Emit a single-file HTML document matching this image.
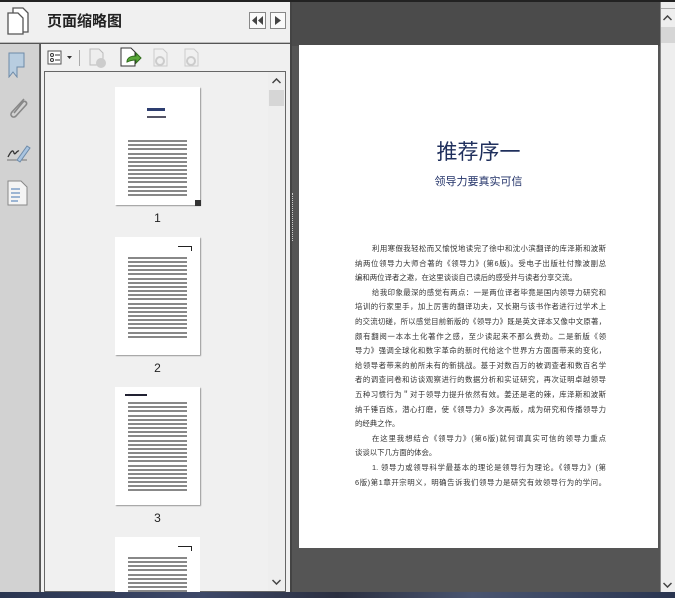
<!DOCTYPE html>
<html><head><meta charset="utf-8"><style>
*{margin:0;padding:0;box-sizing:border-box}
body{width:675px;height:598px;overflow:hidden;position:relative;background:#555;font-family:"Liberation Sans","Noto Sans CJK SC",sans-serif}
.a{position:absolute}
.thumb{position:absolute;left:115px;width:85px;height:118px;background:#fff;box-shadow:1px 1px 1px #999}
.tl{position:absolute;left:13px;right:13px;height:2px;background:#888}
.num{position:absolute;left:150px;width:15px;text-align:center;font-size:12px;color:#222}
.txt{position:absolute;left:355px;width:251px;font-size:7.4px;line-height:14.6px;color:#333;font-family:"Liberation Sans","Noto Sans CJK SC",sans-serif}
.txt div{white-space:nowrap;text-align:justify;text-align-last:justify;height:14.6px}
.txt div.e{text-align-last:left}
.ind{padding-left:17px}
</style></head><body>
<div class="a" style="left:0;top:0;width:675px;height:2px;background:#222"></div>
<div class="a" style="left:0;top:2px;width:290px;height:41px;background:#f0f0f0;border-bottom:1px solid #bbb"></div>
<svg class="a" style="left:6px;top:6px" width="24" height="30" viewBox="0 0 24 30"><path d="M7 2h10l5 5v19H7z" fill="#fff" stroke="#555" stroke-width="1.3"/><path d="M2 7h10l5 5v16H2z" fill="#fff" stroke="#555" stroke-width="1.3"/></svg>
<div class="a" style="left:47px;top:10px;font-size:15px;font-weight:bold;color:#222;font-family:'Noto Sans CJK SC',sans-serif">页面缩略图</div>
<div class="a" style="left:249px;top:12px;width:17px;height:17px;border:1px solid #888;background:#fafafa"></div>
<svg class="a" style="left:252px;top:16px" width="12" height="9"><path d="M5 0L0 4.5 5 9zM11 0L6 4.5 11 9z" fill="#444"/></svg>
<div class="a" style="left:270px;top:12px;width:16px;height:17px;border:1px solid #888;background:#fafafa"></div>
<svg class="a" style="left:275px;top:16px" width="7" height="9"><path d="M0 0L6 4.5 0 9z" fill="#444"/></svg>
<div class="a" style="left:0;top:44px;width:40px;height:548px;background:#d2d2d2;border-right:1px solid #666"></div>
<svg class="a" style="left:8px;top:52px" width="18" height="26"><path d="M1 1h15v14h-7v10l-4-5-4 5z" fill="#b8cde0" stroke="#6d8aa8"/></svg>
<svg class="a" style="left:6px;top:96px" width="24" height="24"><path d="M18 3L6 16c-3 3 1 7 4 4l10-11c2-2-1-5-3-3L8 17" fill="none" stroke="#888" stroke-width="1.6"/></svg>
<svg class="a" style="left:5px;top:142px" width="26" height="22"><path d="M2 18h20" stroke="#777"/><path d="M3 15c3-6 5-8 6-4 1 3 3-3 5-2" fill="none" stroke="#333" stroke-width="1.3"/><path d="M12 18l10-14 3 2-10 14z" fill="#a9c4e0" stroke="#6d8aa8"/></svg>
<svg class="a" style="left:7px;top:180px" width="22" height="26"><path d="M1 1h13l6 6v18H1z" fill="#f4f4f4" stroke="#888"/><path d="M4 9h9M4 13h9M4 17h9M4 21h7" stroke="#7fa0c8" stroke-width="1.4"/></svg>
<div class="a" style="left:41px;top:44px;width:249px;height:548px;background:#f0f0f0"></div>
<div class="a" style="left:44px;top:71px;width:242px;height:521px;border:1px solid #666;background:#f0f0f0"></div>
<svg class="a" style="left:47px;top:49px" width="28" height="18"><rect x="1" y="2" width="13" height="13" fill="#fff" stroke="#555"/><circle cx="5" cy="6" r="1.5" fill="none" stroke="#333"/><circle cx="5" cy="11" r="1.5" fill="none" stroke="#333"/><path d="M8 6h5M8 11h5" stroke="#333"/><path d="M20 7h5l-2.5 3z" fill="#333"/></svg>
<div class="a" style="left:79px;top:50px;width:1px;height:16px;background:#aaa"></div>
<svg class="a" style="left:88px;top:47px" width="22" height="22"><path d="M2 2h9l4 4v12H2z" fill="#eee" stroke="#bbb"/><circle cx="13" cy="16" r="5" fill="#ccc"/></svg>
<svg class="a" style="left:119px;top:46px" width="24" height="24"><path d="M2 2h10l4 4v14H2z" fill="#fff" stroke="#333"/><path d="M8 16c0-5 4-6 9-6v-3l5 5-5 5v-3c-4 0-7 1-9 2z" fill="#5aa83a" stroke="#2e6b1b"/></svg>
<svg class="a" style="left:150px;top:47px" width="22" height="22"><path d="M4 2h9l4 4v13H4z" fill="none" stroke="#ccc"/><circle cx="10" cy="14" r="4" fill="none" stroke="#ccc" stroke-width="2"/></svg>
<svg class="a" style="left:181px;top:47px" width="22" height="22"><path d="M4 2h9l4 4v13H4z" fill="none" stroke="#ccc"/><circle cx="10" cy="14" r="4" fill="none" stroke="#ccc" stroke-width="2"/></svg>
<div class="a" style="left:268px;top:72px;width:17px;height:519px;background:#eee"></div>
<svg class="a" style="left:272px;top:78px" width="9" height="6"><path d="M0.5 5L4.5 1 8.5 5" fill="none" stroke="#444" stroke-width="1.5"/></svg>
<div class="a" style="left:269px;top:90px;width:15px;height:16px;background:#d6d6d6"></div>
<svg class="a" style="left:272px;top:579px" width="9" height="6"><path d="M0.5 1L4.5 5 8.5 1" fill="none" stroke="#444" stroke-width="1.5"/></svg>
<div class="thumb" style="top:87px">
<div class="a" style="left:32px;top:21px;width:18px;height:3px;background:#2d3e70"></div>
<div class="a" style="left:32px;top:29px;width:19px;height:2px;background:#556"></div>
<div class="tl" style="top:53px"></div><div class="tl" style="top:57px"></div><div class="tl" style="top:61px"></div><div class="tl" style="top:66px"></div><div class="tl" style="top:70px"></div><div class="tl" style="top:74px"></div><div class="tl" style="top:78px"></div><div class="tl" style="top:82px"></div><div class="tl" style="top:86px"></div><div class="tl" style="top:90px"></div><div class="tl" style="top:94px"></div><div class="tl" style="top:99px"></div><div class="tl" style="top:103px"></div><div class="tl" style="top:107px"></div>
<div class="a" style="left:80px;top:113px;width:6px;height:6px;background:#333"></div>
</div>
<div class="num" style="top:211px">1</div>
<div class="thumb" style="top:237px">
<div class="a" style="left:63px;top:9px;width:14px;height:5px;border-top:1px solid #222;border-right:1px solid #222"></div>
<div class="tl" style="top:20px"></div><div class="tl" style="top:24px"></div><div class="tl" style="top:28px"></div><div class="tl" style="top:32px"></div><div class="tl" style="top:36px"></div><div class="tl" style="top:41px"></div><div class="tl" style="top:45px"></div><div class="tl" style="top:49px"></div><div class="tl" style="top:53px"></div><div class="tl" style="top:57px"></div><div class="tl" style="top:61px"></div><div class="tl" style="top:66px"></div><div class="tl" style="top:70px"></div><div class="tl" style="top:74px"></div><div class="tl" style="top:78px"></div><div class="tl" style="top:82px"></div><div class="tl" style="top:86px"></div><div class="tl" style="top:90px"></div><div class="tl" style="top:95px"></div><div class="tl" style="top:99px"></div>
</div>
<div class="num" style="top:361px">2</div>
<div class="thumb" style="top:387px">
<div class="a" style="left:10px;top:7px;width:22px;height:2px;background:#223"></div>
<div class="tl" style="top:15px"></div><div class="tl" style="top:19px"></div><div class="tl" style="top:23px"></div><div class="tl" style="top:28px"></div><div class="tl" style="top:32px"></div><div class="tl" style="top:36px"></div><div class="tl" style="top:40px"></div><div class="tl" style="top:44px"></div><div class="tl" style="top:48px"></div><div class="tl" style="top:53px"></div><div class="tl" style="top:57px"></div><div class="tl" style="top:61px"></div><div class="tl" style="top:65px"></div><div class="tl" style="top:69px"></div><div class="tl" style="top:73px"></div><div class="tl" style="top:78px"></div><div class="tl" style="top:82px"></div><div class="tl" style="top:86px"></div><div class="tl" style="top:90px"></div><div class="tl" style="top:94px"></div><div class="tl" style="top:98px"></div><div class="tl" style="top:102px"></div>
</div>
<div class="num" style="top:511px">3</div>
<div class="thumb" style="top:537px;height:55px;box-shadow:none">
<div class="a" style="left:63px;top:9px;width:14px;height:5px;border-top:1px solid #222;border-right:1px solid #222"></div>
<div class="tl" style="top:20px"></div><div class="tl" style="top:24px"></div><div class="tl" style="top:28px"></div><div class="tl" style="top:32px"></div><div class="tl" style="top:37px"></div><div class="tl" style="top:41px"></div><div class="tl" style="top:45px"></div><div class="tl" style="top:49px"></div><div class="tl" style="top:53px"></div>
</div>
<div class="a" style="left:290px;top:2px;width:2px;height:590px;background:#444"></div>
<div class="a" style="left:292px;top:193px;width:2px;height:48px;border-left:1px dotted #ccc"></div>
<div class="a" style="left:292px;top:2px;width:368px;height:44px;background:#4b4b4b"></div>
<div class="a" style="left:299px;top:45px;width:359px;height:503px;background:#fff"></div>
<div class="a" style="left:299px;top:136px;width:359px;text-align:center;font-size:21px;color:#1f2f5c;font-family:'Noto Sans CJK SC',sans-serif;line-height:30px">推荐序一</div>
<div class="a" style="left:299px;top:173px;width:359px;text-align:center;font-size:11px;color:#24346a;font-family:'Noto Sans CJK SC',sans-serif;line-height:16px">领导力要真实可信</div>
<div class="txt" style="top:242px">
<div class="ind">利用寒假我轻松而又愉悦地读完了徐中和沈小滨翻译的库泽斯和波斯</div>
<div>纳两位领导力大师合著的《领导力》(第6版)。受电子出版社付豫波副总</div>
<div class="e">编和两位译者之邀，在这里谈谈自己读后的感受并与读者分享交流。</div>
<div class="ind">给我印象最深的感觉有两点：一是两位译者毕竟是国内领导力研究和</div>
<div>培训的行家里手，加上厉害的翻译功夫，又长期与该书作者进行过学术上</div>
<div>的交流切磋，所以感觉目前新版的《领导力》既是英文译本又像中文原著，</div>
<div>颇有翻阅一本本土化著作之感，至少读起来不那么费劲。二是新版《领</div>
<div>导力》强调全球化和数字革命的新时代给这个世界方方面面带来的变化，</div>
<div>给领导者带来的前所未有的新挑战。基于对数百万的被调查者和数百名学</div>
<div>者的调查问卷和访谈观察进行的数据分析和实证研究，再次证明卓越领导</div>
<div>五种习惯行为＂对于领导力提升依然有效。姜还是老的辣，库泽斯和波斯</div>
<div>纳千锤百炼，潜心打磨，使《领导力》多次再版，成为研究和传播领导力</div>
<div class="e">的经典之作。</div>
<div class="ind">在这里我想结合《领导力》(第6版)就何谓真实可信的领导力重点</div>
<div class="e">谈谈以下几方面的体会。</div>
<div class="ind">1. 领导力或领导科学最基本的理论是领导行为理论。《领导力》(第</div>
<div>6版)第1章开宗明义，明确告诉我们领导力是研究有效领导行为的学问。</div>
</div>
<div class="a" style="left:660px;top:2px;width:15px;height:590px;background:#eee;border-left:1px solid #888"></div>
<div class="a" style="left:661px;top:8px;width:14px;height:1px;background:#aaa"></div>
<svg class="a" style="left:663px;top:15px" width="9" height="6"><path d="M0.5 5L4.5 1 8.5 5" fill="none" stroke="#444" stroke-width="1.5"/></svg>
<div class="a" style="left:661px;top:27px;width:14px;height:16px;background:#d6d6d6"></div>
<svg class="a" style="left:663px;top:582px" width="9" height="6"><path d="M0.5 1L4.5 5 8.5 1" fill="none" stroke="#444" stroke-width="1.5"/></svg>
<div class="a" style="left:0;top:592px;width:675px;height:6px;background:linear-gradient(90deg,#2a3550,#3d4868 30%,#2b2f40 50%,#4a5570 70%,#2a3550)"></div>
</body></html>
